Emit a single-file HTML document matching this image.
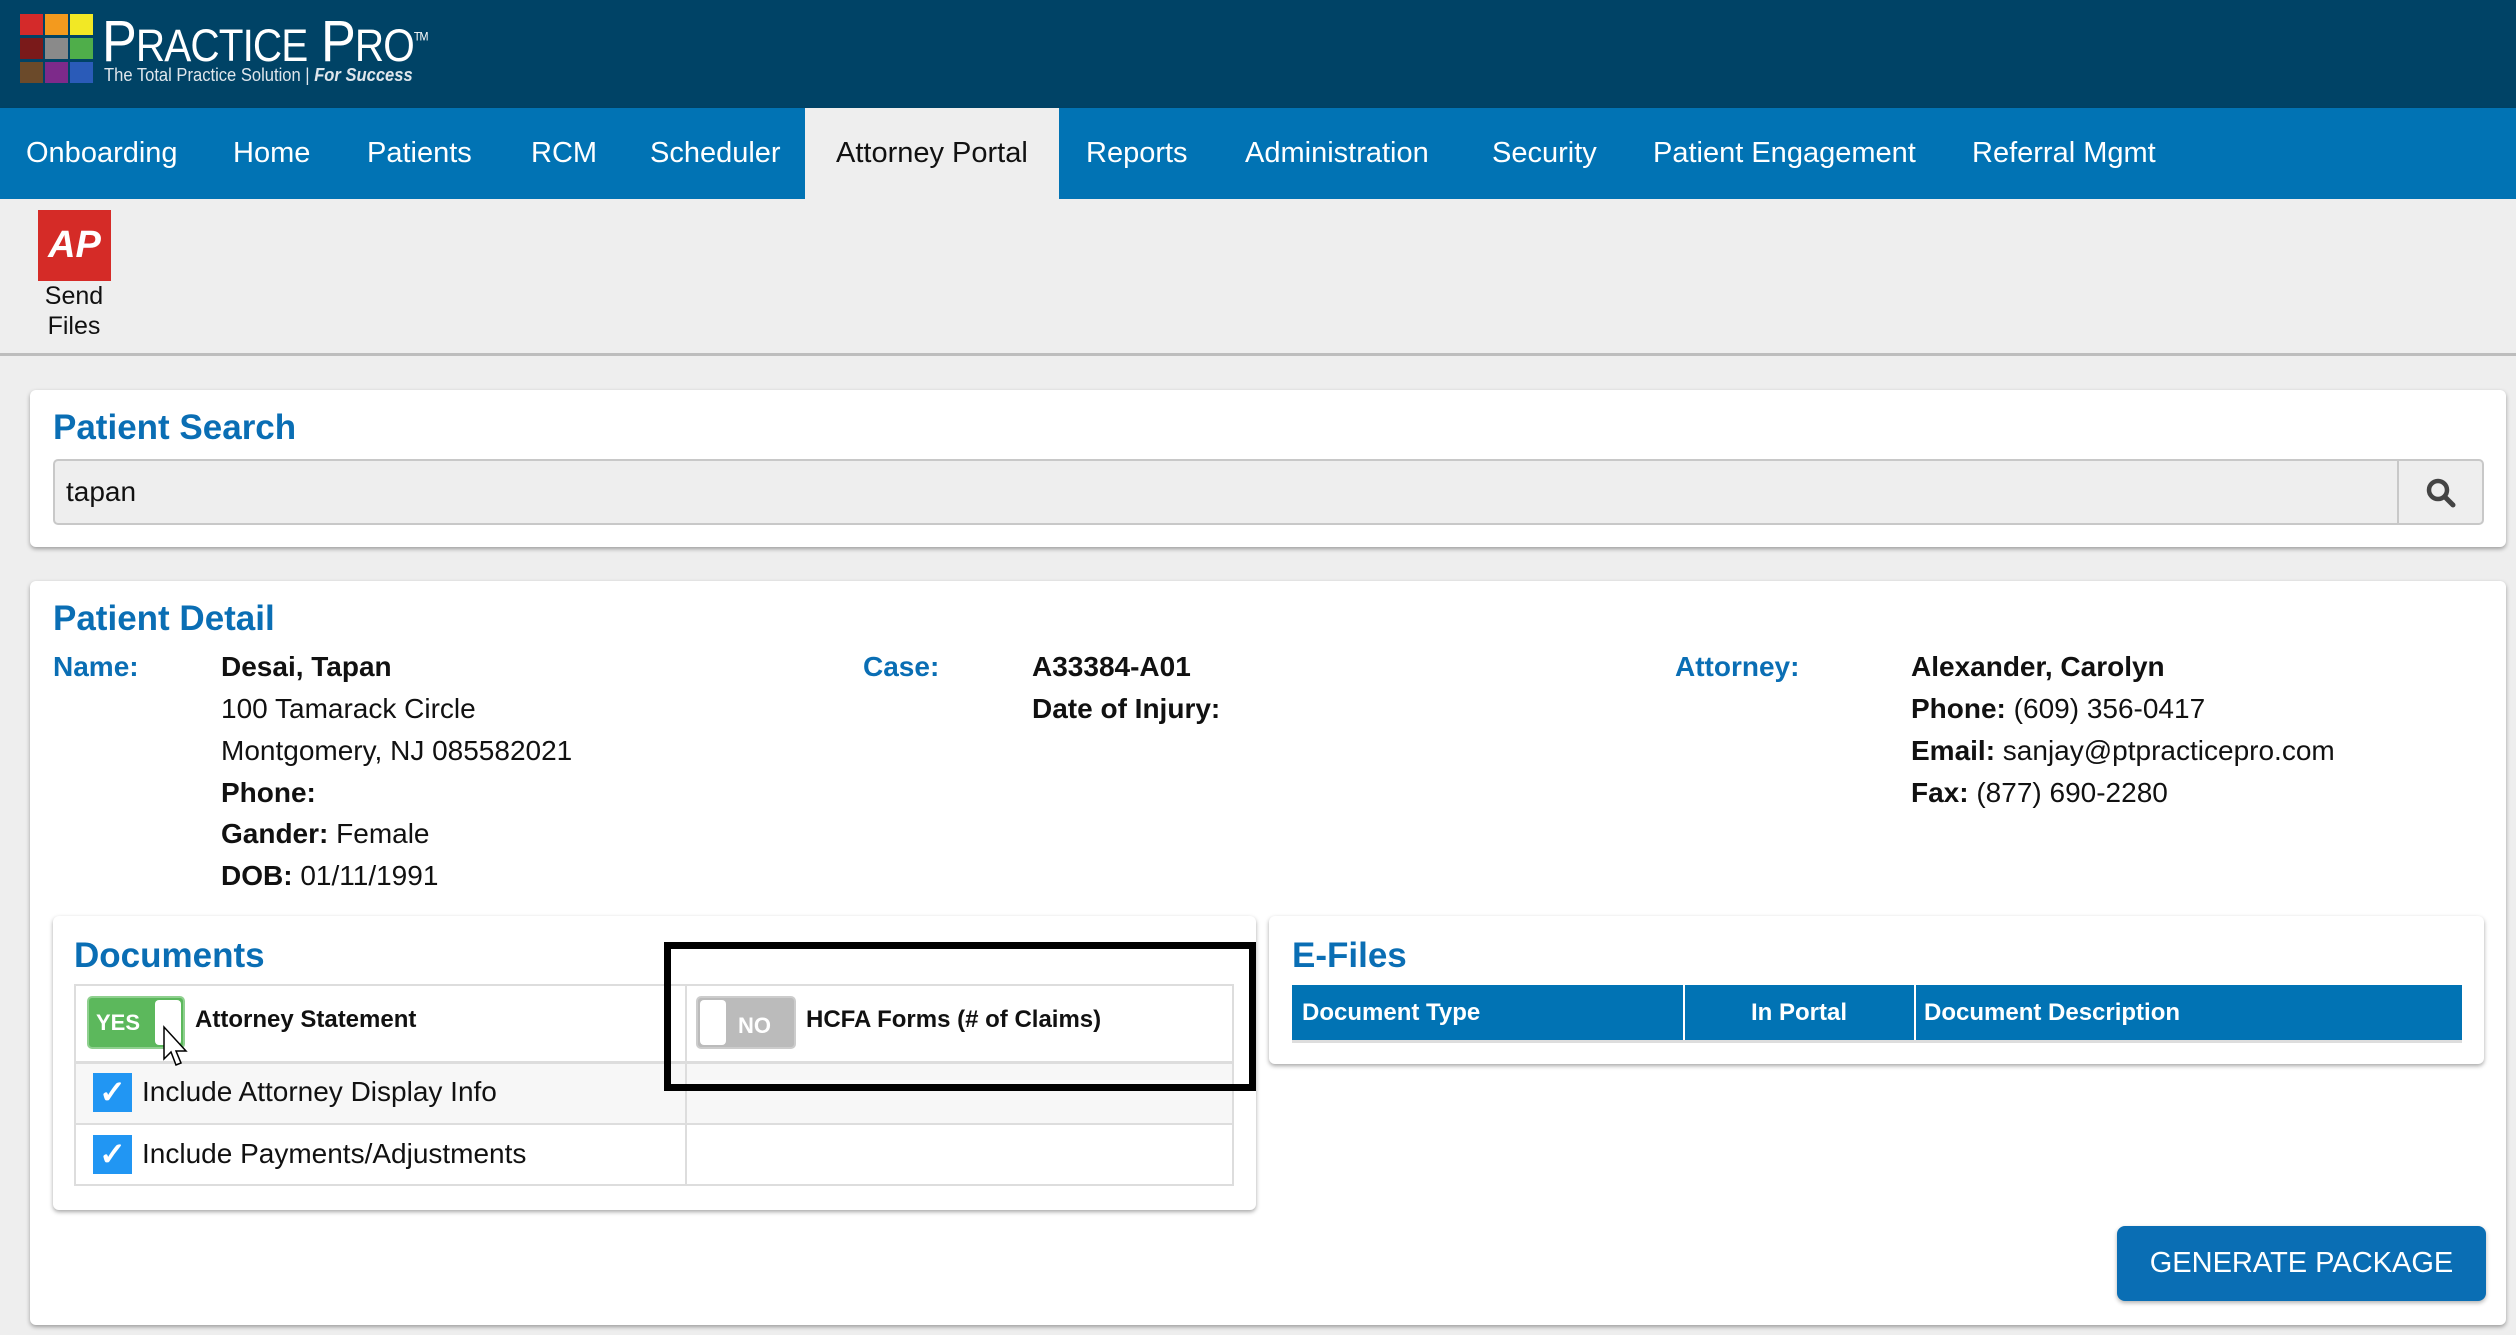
<!DOCTYPE html>
<html><head><meta charset="utf-8"><style>
*{box-sizing:border-box;margin:0;padding:0}
body{width:2516px;height:1335px;background:#eeeeee;font-family:"Liberation Sans",Arial,sans-serif;position:relative;overflow:hidden;color:#111}
.a{position:absolute}
#hdr{left:0;top:0;width:2516px;height:108px;background:#004366}
#nav{left:0;top:108px;width:2516px;height:91px;background:#0173b4;box-shadow:0 3px 4px rgba(0,0,0,.3)}
.ni{position:absolute;top:0;height:91px;line-height:91px;color:#fff;font-size:29px}
#tb{left:0;top:199px;width:2516px;height:157px;background:#eeeeee;border-bottom:3px solid #bdbdbd}
.panel{position:absolute;background:#fff;border-radius:6px;box-shadow:0 2px 4px rgba(0,0,0,.35)}
.ttl{position:absolute;color:#0a6eb4;font-weight:bold;font-size:35px}
.t{position:absolute;font-size:28px;white-space:nowrap}
.lb{color:#0a6eb4;font-weight:bold}
.b{font-weight:bold}
.chk{position:absolute;width:39px;height:39px;background:#2196f3;color:#fff;font-size:32px;text-align:center;line-height:39px;font-weight:bold}
</style></head><body>
<div id="hdr" class="a">
  <svg class="a" style="left:20px;top:14px" width="76" height="70">
    <rect x="0" y="0" width="23" height="21" fill="#d42a2a"/><rect x="25" y="0" width="23" height="21" fill="#f39a1e"/><rect x="50" y="0" width="23" height="21" fill="#f2e825"/>
    <rect x="0" y="24" width="23" height="21" fill="#7a1a1a"/><rect x="25" y="24" width="23" height="21" fill="#8a8a8a"/><rect x="50" y="24" width="23" height="21" fill="#4fae4a"/>
    <rect x="0" y="48" width="23" height="21" fill="#6b4a2a"/><rect x="25" y="48" width="23" height="21" fill="#7d2a8a"/><rect x="50" y="48" width="23" height="21" fill="#2a5bb8"/>
  </svg>
  <div class="a" style="left:102px;top:8px;color:#fff;font-size:58px;letter-spacing:-1px;transform:scaleX(.9);transform-origin:left;white-space:nowrap">P<span style="font-size:45px">RACTICE</span> P<span style="font-size:45px">RO</span><sup style="font-size:12px">TM</sup></div>
  <div class="a" style="left:104px;top:65px;color:#dfe6ec;font-size:18px;white-space:nowrap;transform:scaleX(.92);transform-origin:left">The Total Practice Solution | <i><b>For Success</b></i></div>
</div>
<div id="nav" class="a">
  <div class="a" style="left:805px;top:0;width:254px;height:91px;background:#eeeeee"></div>
  <div class="ni" style="left:26px">Onboarding</div>
  <div class="ni" style="left:233px">Home</div>
  <div class="ni" style="left:367px">Patients</div>
  <div class="ni" style="left:531px">RCM</div>
  <div class="ni" style="left:650px">Scheduler</div>
  <div class="ni" style="left:836px;color:#111">Attorney Portal</div>
  <div class="ni" style="left:1086px">Reports</div>
  <div class="ni" style="left:1245px">Administration</div>
  <div class="ni" style="left:1492px">Security</div>
  <div class="ni" style="left:1653px">Patient Engagement</div>
  <div class="ni" style="left:1972px">Referral Mgmt</div>
</div>
<div id="tb" class="a">
  <div class="a" style="left:38px;top:11px;width:73px;height:71px;background:#d52b27;color:#fff;font-weight:bold;font-style:italic;font-size:38px;text-align:center;line-height:71px">AP</div>
  <div class="a" style="left:24px;top:82px;width:100px;text-align:center;font-size:25px;line-height:30px">Send<br>Files</div>
</div>

<div class="panel" style="left:30px;top:390px;width:2476px;height:157px">
  <div class="ttl" style="left:23px;top:18px">Patient Search</div>
  <div class="a" style="left:23px;top:69px;width:2431px;height:66px;background:#eeeeee;border:2px solid #c8c8c8;border-radius:5px">
    <div class="a" style="left:11px;top:0;line-height:62px;font-size:28px">tapan</div>
    <div class="a" style="right:0;top:0;width:85px;height:62px;border-left:2px solid #c8c8c8">
      <svg class="a" style="left:26px;top:16px" width="32" height="32"><circle cx="13" cy="13" r="9" stroke="#444" stroke-width="4.5" fill="none"/><line x1="20" y1="20" x2="28" y2="28" stroke="#444" stroke-width="5" stroke-linecap="round"/></svg>
    </div>
  </div>
</div>

<div class="panel" style="left:30px;top:581px;width:2476px;height:744px">
  <div class="ttl" style="left:23px;top:18px">Patient Detail</div>
</div>
<div class="t lb" style="left:53px;top:651px">Name:</div>
<div class="t b" style="left:221px;top:651px">Desai, Tapan</div>
<div class="t" style="left:221px;top:693px">100 Tamarack Circle</div>
<div class="t" style="left:221px;top:735px">Montgomery, NJ 085582021</div>
<div class="t b" style="left:221px;top:777px">Phone:</div>
<div class="t" style="left:221px;top:818px"><b>Gander:</b> Female</div>
<div class="t" style="left:221px;top:860px"><b>DOB:</b> 01/11/1991</div>
<div class="t lb" style="left:863px;top:651px">Case:</div>
<div class="t b" style="left:1032px;top:651px">A33384-A01</div>
<div class="t b" style="left:1032px;top:693px">Date of Injury:</div>
<div class="t lb" style="left:1675px;top:651px">Attorney:</div>
<div class="t b" style="left:1911px;top:651px">Alexander, Carolyn</div>
<div class="t" style="left:1911px;top:693px"><b>Phone:</b> (609) 356-0417</div>
<div class="t" style="left:1911px;top:735px"><b>Email:</b> sanjay@ptpracticepro.com</div>
<div class="t" style="left:1911px;top:777px"><b>Fax:</b> (877) 690-2280</div>

<div class="panel" style="left:53px;top:916px;width:1203px;height:294px">
  <div class="ttl" style="left:21px;top:20px">Documents</div>
</div>
<div class="a" style="left:74px;top:984px;width:1160px;height:202px;border:2px solid #ddd"></div>
<div class="a" style="left:76px;top:1061px;width:1156px;height:64px;background:#f7f7f7;border-top:3px solid #ddd;border-bottom:2px solid #ddd"></div>
<div class="a" style="left:685px;top:984px;width:2px;height:202px;background:#ddd"></div>
<div class="a" style="left:87px;top:996px;width:98px;height:53px;background:#5cb85c;border:2px solid #8fd08f;border-radius:5px">
  <div class="a" style="left:7px;top:0;line-height:49px;color:#fff;font-size:22px;font-weight:bold">YES</div>
  <div class="a" style="right:2px;top:2px;width:26px;height:45px;background:#fff;border-radius:4px"></div>
</div>
<div class="t b" style="left:195px;top:1006px;font-size:24px">Attorney Statement</div>
<div class="a" style="left:696px;top:996px;width:100px;height:53px;background:#bbb;border:2px solid #ccc;border-radius:5px">
  <div class="a" style="left:2px;top:2px;width:26px;height:45px;background:#fff;border-radius:4px"></div>
  <div class="a" style="left:40px;top:3px;line-height:49px;color:#fff;font-size:22px;font-weight:bold">NO</div>
</div>
<div class="t b" style="left:806px;top:1006px;font-size:24px">HCFA Forms (# of Claims)</div>
<div class="chk" style="left:93px;top:1073px">✓</div>
<div class="t" style="left:142px;top:1076px">Include Attorney Display Info</div>
<div class="chk" style="left:93px;top:1135px">✓</div>
<div class="t" style="left:142px;top:1138px">Include Payments/Adjustments</div>
<svg class="a" style="left:162px;top:1025px" width="28" height="44"><path d="M2 2 L2 34 L9 27 L14 40 L19 38 L14 26 L24 26 Z" fill="#fff" stroke="#000" stroke-width="1.5"/></svg>
<div class="a" style="left:664px;top:942px;width:592px;height:149px;border:7px solid #000"></div>

<div class="panel" style="left:1269px;top:916px;width:1215px;height:148px">
  <div class="ttl" style="left:23px;top:20px">E-Files</div>
  <div class="a" style="left:23px;top:69px;width:1170px;height:55px;background:#0173b4;color:#fff;font-weight:bold;font-size:24px;line-height:55px">
    <div class="a" style="left:10px">Document Type</div>
    <div class="a" style="left:391px;width:2px;height:55px;background:#fff"></div>
    <div class="a" style="left:459px">In Portal</div>
    <div class="a" style="left:622px;width:2px;height:55px;background:#fff"></div>
    <div class="a" style="left:632px">Document Description</div>
  </div>
  <div class="a" style="left:23px;top:124px;width:1170px;height:3px;background:#ddd"></div>
</div>

<div class="a" style="left:2117px;top:1226px;width:369px;height:75px;background:#0a6eb4;border-radius:8px;box-shadow:0 2px 4px rgba(0,0,0,.3);color:#fff;font-size:29px;text-align:center;line-height:75px">GENERATE PACKAGE</div>
</body></html>
